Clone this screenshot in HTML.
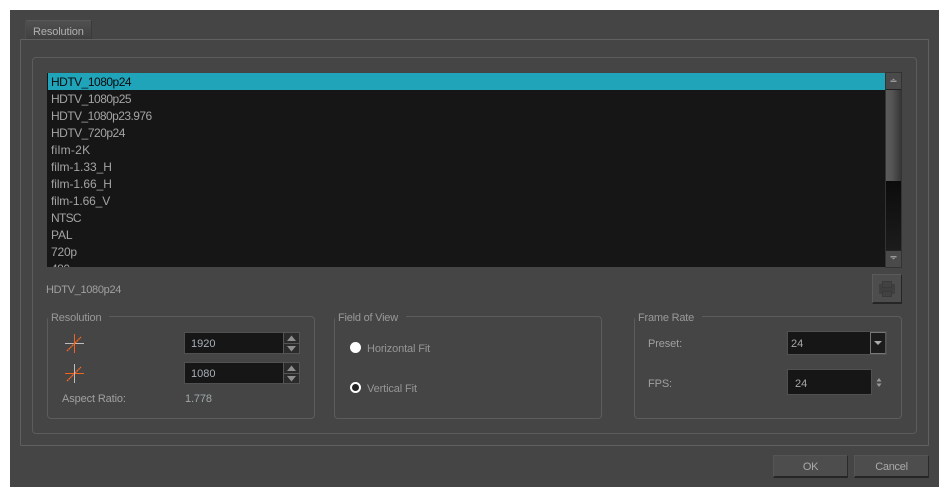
<!DOCTYPE html>
<html><head><meta charset="utf-8">
<style>
html,body{margin:0;padding:0;background:#fff;}
body{width:949px;height:497px;position:relative;overflow:hidden;font-family:"Liberation Sans",sans-serif;font-size:11px;color:#a8a8a8;}
div,span{position:absolute;box-sizing:border-box;white-space:nowrap;}
.t{line-height:14px;height:14px;letter-spacing:-.12px;}
.row{left:4px;top:0;height:17px;line-height:19px;font-size:12px;letter-spacing:-.5px;color:#a4a4a4;}
.fs{border:1px solid #5c5c5c;border-radius:4px;}
.lg{background:#454545;padding:0 8px 0 3px;line-height:16px;height:14px;color:#999;font-size:11px;letter-spacing:-.15px;}
.inp{background:#161616;border:1px solid #505050;color:#a8a8a8;}
.btn{background:#4d4d4d;border:1px solid #555;border-right:1px solid #2a2a2a;border-bottom:2px solid #262626;color:#aaa;text-align:center;font-size:11px;line-height:23px;letter-spacing:-.3px;}
</style></head><body>
<div style="left:10px;top:10px;width:929px;height:477px;background:#454545"></div>
<div style="left:25px;top:20px;width:67px;height:20px;background:linear-gradient(#505050,#3f3f3f);border-top:1px solid #585858;border-left:1px solid #4c4c4c;border-right:1px solid #3a3a3a;border-radius:2px 2px 0 0"></div>
<div class="t" style="left:33px;top:25px;color:#b0b0b0">Resolution</div>
<div style="left:20px;top:39px;width:909px;height:407px;border:1px solid #606060;border-radius:1px"></div>
<div style="left:32px;top:57px;width:885px;height:377px;border:1px solid #5c5c5c;border-radius:4px"></div>

<div style="left:47px;top:73px;width:839px;height:194px;background:#161616;overflow:hidden">
<div style="left:1px;top:0;width:838px;height:17px;background:#20a4ba"></div>
<div class="row" style="top:0;color:#0a0a0a">HDTV_1080p24</div>
<div class="row" style="top:17px">HDTV_1080p25</div>
<div class="row" style="top:34px;letter-spacing:-.55px">HDTV_1080p23.976</div>
<div class="row" style="top:51px;letter-spacing:-.5px">HDTV_720p24</div>
<div class="row" style="top:68px;letter-spacing:.3px">film-2K</div>
<div class="row" style="top:85px;letter-spacing:-.05px">film-1.33_H</div>
<div class="row" style="top:102px;letter-spacing:-.05px">film-1.66_H</div>
<div class="row" style="top:119px;letter-spacing:-.15px">film-1.66_V</div>
<div class="row" style="top:136px;letter-spacing:-.7px">NTSC</div>
<div class="row" style="top:153px;letter-spacing:-.1px">PAL</div>
<div class="row" style="top:170px;letter-spacing:-.2px">720p</div>
<div class="row" style="top:187px">480</div>
</div>

<div style="left:885px;top:72px;width:17px;height:196px;background:#141414;border:1px solid #333"></div>
<div style="left:886px;top:73px;width:15px;height:17px;background:#4a4a4a;border-bottom:1px solid #222"></div>
<svg style="position:absolute;left:889px;top:77px" width="9" height="7"><path d="M3 3L4.500 1.500L6 3ZM1.500 3.500H7.500V5H1.500Z" fill="#999"/></svg>
<div style="left:886px;top:90px;width:15px;height:91px;background:linear-gradient(90deg,#5a5a5a,#555 40%,#363636)"></div>
<div style="left:886px;top:181px;width:15px;height:70px;background:linear-gradient(#0c0c0c,#1c1c1c)"></div>
<div style="left:886px;top:250px;width:15px;height:17px;background:#4a4a4a;border-top:1px solid #222"></div>
<svg style="position:absolute;left:889px;top:254px" width="9" height="7"><path d="M1.500 2H7.500V3.500H1.500ZM3 4H6L4.500 5.500Z" fill="#999"/></svg>

<div class="t" style="left:46px;top:283px;color:#a0a0a0;letter-spacing:-.32px">HDTV_1080p24</div>

<div style="left:872px;top:274px;width:30px;height:30px;background:#4d4d4d;border:1px solid #5a5a5a;border-right:1px solid #262626;border-bottom:2px solid #262626"></div>
<svg style="position:absolute;left:878px;top:280px" width="18" height="18"><path d="M1 4H17V14H1Z" fill="#3f3f3f"/><path d="M4.500 1.500H13.500V7.500H4.500ZM4.500 11.500H13.500V16.500H4.500Z" fill="#424242" stroke="#3a3a3a"/></svg>

<!-- Resolution group -->
<div class="fs" style="left:47px;top:316px;width:268px;height:103px"></div>
<div class="lg" style="left:48px;top:310px">Resolution</div>
<svg style="position:absolute;left:64px;top:333px" width="22" height="50">
<path d="M1 10.500H20" stroke="#bdbdbd"/>
<path d="M3 18L17 4" stroke="#f0641e" stroke-width="1.300" stroke-dasharray="1.800 .5" fill="none"/>
<path d="M10.500 1V20" stroke="#f0641e"/>
<path d="M1 40.500H20" stroke="#f0641e"/>
<path d="M3 48L17 34" stroke="#f0641e" stroke-width="1.300" stroke-dasharray="1.800 .5" fill="none"/>
<path d="M10.500 31V50" stroke="#bdbdbd"/>
</svg>

<div class="inp" style="left:184px;top:332px;width:100px;height:22px;padding-left:6px;line-height:23px;border-right:none;color:#a8b0b8">1920</div>
<div style="left:283px;top:332px;width:17px;height:22px;background:#555"></div>
<div style="left:284px;top:333px;width:15px;height:10px;background:#2b2b2b"></div>
<div style="left:284px;top:344px;width:15px;height:9px;background:#2b2b2b"></div>
<div class="inp" style="left:184px;top:362px;width:100px;height:22px;padding-left:6px;line-height:23px;border-right:none;color:#a8b0b8">1080</div>
<div style="left:283px;top:362px;width:17px;height:22px;background:#555"></div>
<div style="left:284px;top:363px;width:15px;height:10px;background:#2b2b2b"></div>
<div style="left:284px;top:374px;width:15px;height:9px;background:#2b2b2b"></div>
<svg style="position:absolute;left:284px;top:333px" width="15" height="52" fill="#8e8e8e"><path d="M7.500 2.500L12 8H3ZM3 13H12L7.500 18.500ZM7.500 32.500L12 38H3ZM3 43H12L7.500 48.500Z"/></svg>

<div class="t" style="left:62px;top:392px;color:#a0a0a0">Aspect Ratio:</div>
<div class="t" style="left:185px;top:392px;color:#a0a8a8">1.778</div>

<!-- FOV group -->
<div class="fs" style="left:334px;top:316px;width:268px;height:103px"></div>
<div class="lg" style="left:335px;top:310px;letter-spacing:-.22px">Field of View</div>
<div style="left:350px;top:342px;width:11px;height:11px;border-radius:50%;background:#fff"></div>
<div class="t" style="left:367px;top:342px;color:#969696">Horizontal Fit</div>
<div style="left:350px;top:382px;width:11px;height:11px;border-radius:50%;background:#222;border:2.500px solid #fff"></div>
<div class="t" style="left:367px;top:382px;color:#969696">Vertical Fit</div>

<!-- Frame rate group -->
<div class="fs" style="left:634px;top:316px;width:268px;height:103px"></div>
<div class="lg" style="left:635px;top:310px;letter-spacing:-.2px">Frame Rate</div>
<div class="t" style="left:648px;top:337px;color:#a0a0a0">Preset:</div>
<div class="inp" style="left:787px;top:331px;width:100px;height:24px;padding-left:3px;line-height:24px;">24</div>
<div style="left:870px;top:332px;width:16px;height:22px;background:#1c1c1c;border:1px solid #777;border-right:1px solid #555"></div>
<svg style="position:absolute;left:874px;top:340px" width="9" height="6"><path d="M0 1H8L4 5Z" fill="#aaa"/></svg>
<div class="t" style="left:648px;top:377px;color:#a0a0a0">FPS:</div>
<div class="inp" style="left:787px;top:369px;width:85px;height:26px;padding-left:7px;line-height:28px;">24</div>
<svg style="position:absolute;left:876px;top:378px" width="6" height="10"><path d="M3 0L5.500 3.500H.5ZM.5 5.500H5.500L3 9Z" fill="#999"/></svg>

<div class="btn" style="left:773px;top:455px;width:75px;height:23px">OK</div>
<div class="btn" style="left:854px;top:455px;width:75px;height:23px">Cancel</div>
</body></html>
